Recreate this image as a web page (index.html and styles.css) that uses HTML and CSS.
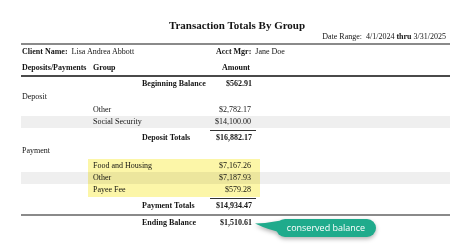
FILE: index.html
```html
<!DOCTYPE html>
<html>
<head>
<meta charset="utf-8">
<link rel="stylesheet" href="styles.css">
</head>
<body>
<div class="page">
  <h1 class="title">Transaction Totals By Group</h1>
  <div class="range">Date Range:&nbsp; 4/1/2024 <b>thru</b> 3/31/2025</div>
  <div class="report">
    <div class="info">
      <div class="info-client"><b>Client Name:</b><span class="val">Lisa Andrea Abbott</span></div>
      <div class="info-mgr"><b>Acct Mgr:</b><span class="val">Jane Doe</span></div>
    </div>
    <div class="row head">
      <span class="c1">Deposits/Payments</span><span class="c2">Group</span><span class="amt">Amount</span>
    </div>
    <div class="row total begin"><span class="lbl">Beginning Balance</span><span class="amt">$562.91</span></div>
    <div class="row cat">Deposit</div>
    <div class="row item gap"><span class="grp">Other</span><span class="amt">$2,782.17</span></div>
    <div class="row item shade"><span class="grp">Social Security</span><span class="amt">$14,100.00</span></div>
    <div class="subrule"></div>
    <div class="row total"><span class="lbl">Deposit Totals</span><span class="amt">$16,882.17</span></div>
    <div class="row cat">Payment</div>
    <div class="hl-group">
      <div class="row item"><span class="grp">Food and Housing</span><span class="amt">$7,167.26</span></div>
      <div class="row item shade"><span class="grp">Other</span><span class="amt">$7,187.93</span></div>
      <div class="row item"><span class="grp">Payee Fee</span><span class="amt">$579.28</span></div>
      <div class="highlight"></div>
    </div>
    <div class="subrule"></div>
    <div class="row total"><span class="lbl">Payment Totals</span><span class="amt">$14,934.47</span></div>
    <div class="endrule"></div>
    <div class="row total ending">
      <span class="lbl">Ending Balance</span><span class="amt">$1,510.61</span>
      <div class="callout">
        <svg class="callout-shape" width="122" height="20" viewBox="0 0 122 20">
          <path d="M0,5.6 Q13,5.2 26,2.6 L31,15.5 Q14,12.5 0,5.6 Z" fill="#1fab8c"/>
          <rect x="21" y="1" width="100" height="18" rx="9" ry="9" fill="#1fab8c"/>
        </svg>
        <span class="callout-text">conserved balance</span>
      </div>
    </div>
  </div>
</div>
</body>
</html>
```
FILE: styles.css
```css
html, body {
  margin: 0;
  padding: 0;
  background: #ffffff;
}

body {
  font-family: "Liberation Serif", "Times New Roman", serif;
  color: #141414;
}

.page {
  width: 474px;
  height: 252px;
  overflow: hidden;
}

.title {
  margin: 18px 0 0;
  font-size: 11px;
  line-height: 14px;
  font-weight: bold;
  text-align: center;
}

.range {
  font-size: 8px;
  line-height: 10px;
  text-align: right;
  padding-right: 28px;
}

.report {
  margin-left: 21px;
  width: 429px;
}

.info {
  margin-top: 1px;
  border-top: 2px solid #8a8a8a;
  padding-top: 1px;
  display: flex;
  font-size: 8px;
  line-height: 12px;
  height: 12px;
}

.info-client {
  width: 194px;
  padding-left: 1px;
}

.info-mgr {
  flex: 1;
}

.val {
  margin-left: 4px;
}

.row {
  display: grid;
  grid-template-columns: 71px 49px 64px 46px 1fr;
  font-size: 8px;
  line-height: 12px;
  height: 12px;
  padding-left: 1px;
  white-space: nowrap;
}

.row .c1 {
  grid-column: 1;
  font-weight: bold;
}

.row .c2 {
  grid-column: 2;
  font-weight: bold;
}

.row .grp {
  grid-column: 2 / span 2;
}

.row .lbl {
  grid-column: 3;
  font-weight: bold;
}

.row .amt {
  grid-column: 4;
  text-align: right;
}

.head {
  margin-top: 4px;
  padding-bottom: 1px;
  border-bottom: 2px solid #4a4a4a;
}

.head .amt {
  font-weight: bold;
  padding-right: 2px;
}

.total .amt {
  font-weight: bold;
}

.item .amt {
  padding-right: 1px;
}

.begin {
  margin-top: 1px;
}

.cat {
  display: block;
  margin-top: 1px;
}

.gap {
  margin-top: 1px;
}

.shade {
  background: #efefef;
}

.subrule {
  margin-top: 2px;
  margin-left: 189px;
  width: 46px;
  border-top: 1px solid #333333;
}

.total {
  margin-top: 1px;
}

.hl-group {
  position: relative;
  margin-top: 3px;
}

.highlight {
  position: absolute;
  left: 67px;
  width: 172px;
  top: -1px;
  bottom: -1px;
  background: #fcf6a8;
  mix-blend-mode: multiply;
  pointer-events: none;
}

.endrule {
  margin-top: 2px;
  border-top: 2px solid #8a8a8a;
}

.ending {
  position: relative;
}

.callout {
  position: absolute;
  left: 234px;
  top: 1px;
  width: 122px;
  height: 20px;
}

.callout-shape {
  position: absolute;
  left: 0;
  top: 0;
  filter: drop-shadow(0 2px 2px rgba(0, 0, 0, 0.3));
}

.callout-text {
  position: absolute;
  left: 21px;
  top: 1px;
  width: 100px;
  height: 18px;
  line-height: 18px;
  text-align: center;
  font-family: "Open Sans", "DejaVu Sans", sans-serif;
  font-size: 9px;
  color: #ffffff;
}
```
